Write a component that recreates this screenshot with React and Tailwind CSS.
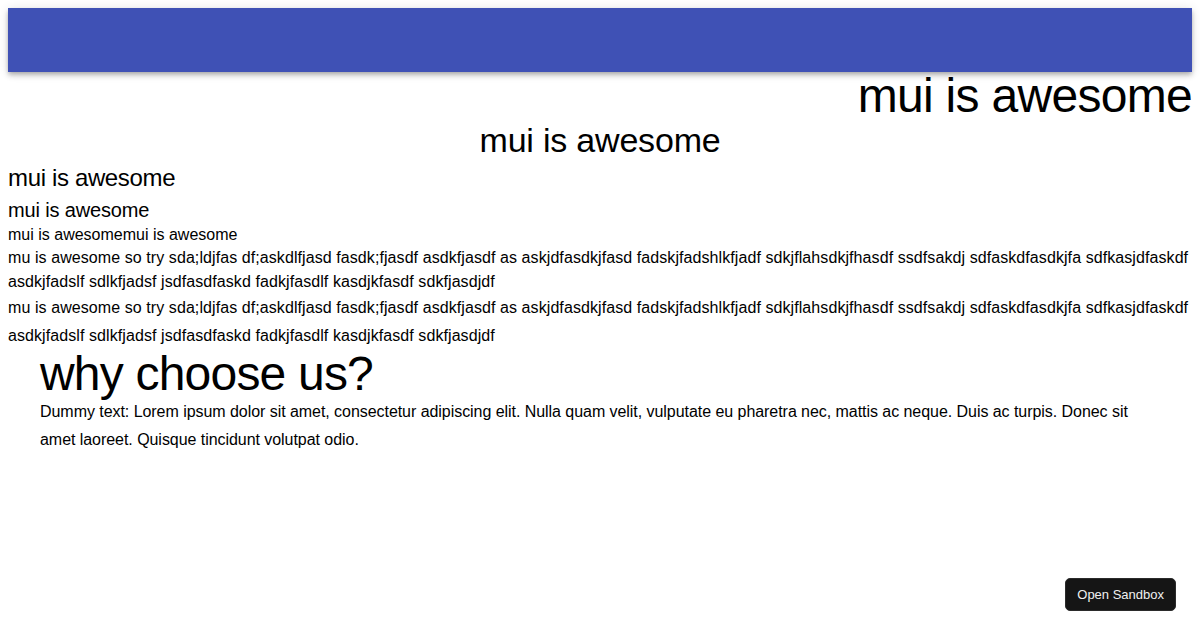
import React from 'react';

const longText =
    "mu is awesome so try sda;ldjfas df;askdlfjasd fasdk;fjasdf asdkfjasdf as askjdfasdkjfasd fadskjfadshlkfjadf sdkjflahsdkjfhasdf ssdfsakdj sdfaskdfasdkjfa sdfkasjdfaskdf asdkjfadslf sdlkfjadsf jsdfasdfaskd fadkjfasdlf kasdjkfasdf sdkfjasdjdf";

const App = () => {
    return (
        <div className="min-h-[630px] bg-white p-2 text-black font-['Liberation_Sans',Arial,sans-serif]">
            <header className="h-16 w-full bg-[#3f51b5] shadow-[0_2px_4px_-1px_rgba(0,0,0,0.2),0_4px_5px_0_rgba(0,0,0,0.14),0_1px_10px_0_rgba(0,0,0,0.12)]" />

            <h3 className="text-right text-[48px] leading-[48px] tracking-[-0.7px] font-normal">mui is awesome</h3>
            <h4 className="text-center text-[34px] leading-[40px] tracking-[-0.2px] font-normal">mui is awesome</h4>
            <h5 className="text-[24px] leading-[36px] tracking-[-0.35px] font-normal">mui is awesome</h5>
            <h6 className="text-[20px] leading-[28px] tracking-[-0.15px] font-normal">mui is awesome</h6>
            <p className="text-base leading-[22px]">
                <span>mui is awesome</span>
                <span>mui is awesome</span>
            </p>
            <p className="text-base leading-6 tracking-[0.08px]">{longText}</p>
            <p className="text-base leading-7 tracking-[0.08px]">{longText}</p>

            <section className="px-8">
                <h2 className="text-[48px] leading-[48px] tracking-[-0.8px] font-normal">why choose us?</h2>
                <p className="text-base leading-7 tracking-[-0.05px]">
                    Dummy text: Lorem ipsum dolor sit amet, consectetur adipiscing elit. Nulla quam velit, vulputate eu pharetra nec, mattis ac neque. Duis ac turpis. Donec sit amet laoreet. Quisque tincidunt volutpat odio.
                </p>
            </section>

            <button className="fixed bottom-[19px] right-[24px] h-[33px] px-[11px] rounded-[5px] bg-[#151515] border border-[#2b2b2b] text-[13px] text-[#f0f0f0] font-['Liberation_Sans',Arial,sans-serif]">
                Open Sandbox
            </button>
        </div>
    );
};

export default App;
